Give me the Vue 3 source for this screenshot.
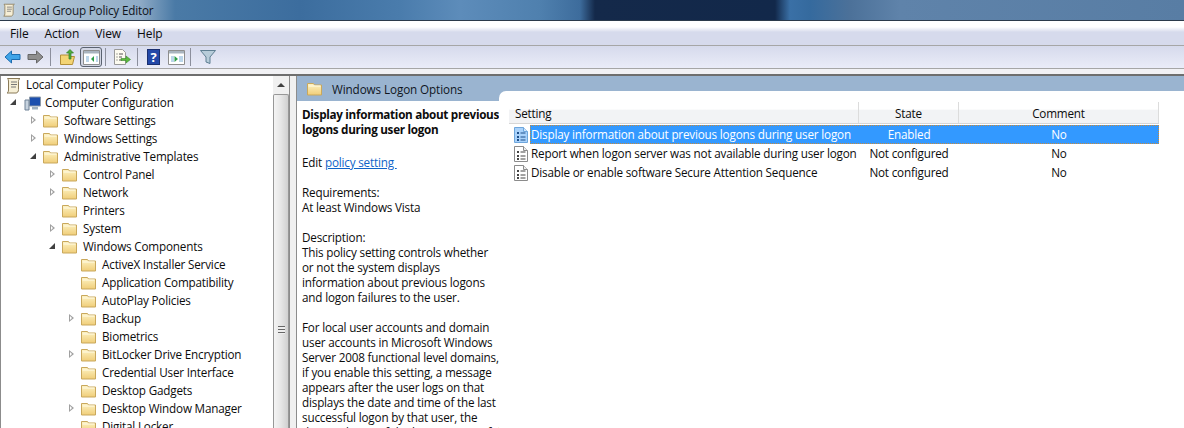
<script setup>
const menus = ["File", "Action", "View", "Help"];

const tree = [
  { label: "Software Settings", depth: 2, exp: "closed" },
  { label: "Windows Settings", depth: 2, exp: "closed" },
  { label: "Administrative Templates", depth: 2, exp: "open" },
  { label: "Control Panel", depth: 3, exp: "closed" },
  { label: "Network", depth: 3, exp: "closed" },
  { label: "Printers", depth: 3 },
  { label: "System", depth: 3, exp: "closed" },
  { label: "Windows Components", depth: 3, exp: "open" },
  { label: "ActiveX Installer Service", depth: 4 },
  { label: "Application Compatibility", depth: 4 },
  { label: "AutoPlay Policies", depth: 4 },
  { label: "Backup", depth: 4, exp: "closed" },
  { label: "Biometrics", depth: 4 },
  { label: "BitLocker Drive Encryption", depth: 4, exp: "closed" },
  { label: "Credential User Interface", depth: 4 },
  { label: "Desktop Gadgets", depth: 4 },
  { label: "Desktop Window Manager", depth: 4, exp: "closed" },
  { label: "Digital Locker", depth: 4 },
];

const settings = [
  { name: "Display information about previous logons during user logon", state: "Enabled", comment: "No", selected: true },
  { name: "Report when logon server was not available during user logon", state: "Not configured", comment: "No" },
  { name: "Disable or enable software Secure Attention Sequence", state: "Not configured", comment: "No" },
];

function indent(depth) {
  return { paddingLeft: (depth - 1) * 19 + 8 + "px" };
}
</script>

<template>
  <div class="win">
    <svg width="0" height="0" class="defs">
      <defs>
        <linearGradient id="fold" x1="0" y1="0" x2="0" y2="1">
          <stop offset="0" stop-color="#fdf3c4" />
          <stop offset="1" stop-color="#f0cd78" />
        </linearGradient>
        <symbol id="folder" viewBox="0 0 15 14">
          <path d="M.5 3V1.500h6l1 1.500h7v10H.5z" fill="url(#fold)" stroke="#c9a85c" />
          <path d="M1.500 4h12" stroke="#fffbe6" />
        </symbol>
        <symbol id="scroll" viewBox="0 0 17 17">
          <path d="M4 1.500h11c-1.500 1-1.500 2-1.500 3v8c0 2-1 3.500-2.500 3.500H2c1-.5 1.500-1.500 1.500-3V4C3.500 3 3 2 2.500 1.500z" fill="#f6efd6" stroke="#8a7a58" />
          <path d="M6 5h6M6 7.500h6M6 10h5" stroke="#777" />
        </symbol>
        <symbol id="page" viewBox="0 0 14 16">
          <path d="M.5.500h9l4 4v11H.5z" fill="#fff" stroke="#8b8b8b" />
          <path d="M9.500.5v4h4" fill="#eee" stroke="#8b8b8b" />
          <path d="M3 5h2v2H3zM3 9h2v2H3zM3 12h2v2H3z" fill="#444" />
          <path d="M6.500 6h5M6.500 10h5M6.500 13h5" stroke="#444" />
        </symbol>
        <symbol id="page-sel" viewBox="0 0 14 16">
          <path d="M.5.500h9l4 4v11H.5z" fill="#a9d2fb" stroke="#6ea6dc" />
          <path d="M9.500.5v4h4" fill="#cfe5fc" stroke="#6ea6dc" />
          <path d="M3 5h2v2H3zM3 9h2v2H3zM3 12h2v2H3z" fill="#1d4f8a" />
          <path d="M6.500 6h5M6.500 10h5M6.500 13h5" stroke="#1d4f8a" />
        </symbol>
      </defs>
    </svg>

    <!-- title bar -->
    <div class="title">
      <svg class="ico-title" width="14" height="16"><use href="#scroll" /></svg>
      <span>Local Group Policy Editor</span>
    </div>

    <!-- menu -->
    <div class="menu">
      <span v-for="m in menus" :key="m">{{ m }}</span>
    </div>

    <!-- toolbar -->
    <div class="tools">
      <svg width="17" height="14" viewBox="0 0 17 14">
        <path d="M1 7l6.500-6v3.500H16v5H7.500V13z" fill="#3fa4e8" stroke="#1c6cb0" />
      </svg>
      <svg class="t-fwd" width="17" height="14" viewBox="0 0 17 14">
        <path d="M16 7L9.500 1v3.500H1v5h8.500V13z" fill="#8f8f8f" stroke="#666" />
      </svg>
      <i class="sep s1"></i>
      <svg class="t-up" width="15" height="16" viewBox="0 0 15 16">
        <path d="M.5 6h9l1 1.500h4L12.500 15.500H.5z" fill="#f3d474" stroke="#b28f38" />
        <path d="M9 10V4H6.500l3.500-3.500L13.500 4H11v6z" fill="#4fae3c" stroke="#2f7d25" stroke-width=".7" />
      </svg>
      <span class="t-active">
        <svg width="17" height="15" viewBox="0 0 17 15">
          <path d="M.5.500h16v14H.5z" fill="#fff" stroke="#8e8e8e" />
          <path d="M1 1h15v2.500H1z" fill="#a9b4bf" />
          <path d="M3 6h3v6H3zM13 6h2v6h-2z" fill="#bcd6ea" />
          <path d="M11 6v6L8 9z" fill="#2e9e49" />
        </svg>
      </span>
      <i class="sep s2"></i>
      <svg class="t-export" width="17" height="16" viewBox="0 0 17 16">
        <path d="M.5.500h8l3 3v12H.5z" fill="#fdfbf0" stroke="#999" />
        <path d="M2.500 5h1M5 5h4M2.500 8h1M5 8h3M2.500 11h1M5 11h3" stroke="#555" />
        <path d="M7 9.500h5V7l4.500 3.500L12 14v-2.500H7z" fill="#5dbb3f" stroke="#3a8a28" stroke-width=".6" />
      </svg>
      <i class="sep s3"></i>
      <span class="t-help">?</span>
      <svg class="t-panel" width="17" height="15" viewBox="0 0 17 15">
        <path d="M.5.500h16v14H.5z" fill="#fff" stroke="#8e8e8e" />
        <path d="M1 1h15v2.500H1z" fill="#a9b4bf" />
        <path d="M3 6h3v6H3zM11 6h4v6h-4z" fill="#bcd6ea" />
        <path d="M6.500 6v6L10 9z" fill="#2e9e49" />
      </svg>
      <i class="sep s4"></i>
      <svg class="t-filter" width="16" height="15" viewBox="0 0 16 15">
        <path d="M.5.500h15L10 7v6.500L6 12V7z" fill="#b7ccd9" stroke="#5f7f92" />
      </svg>
    </div>

    <div class="gap"></div>

    <div class="main">
      <!-- tree -->
      <div class="tree">
        <div class="tree-rows">
          <div class="row root">
            <svg width="17" height="17"><use href="#scroll" /></svg>
            <span class="lbl">Local Computer Policy</span>
          </div>
          <div class="row comp">
            <i class="arrow open"></i>
            <svg class="pc" width="17" height="15" viewBox="0 0 17 15">
              <path d="M5.500 1h11v9h-11z" fill="#1c4fae" stroke="#8a98a8" />
              <path d="M1 4h4v10H1z" fill="#c6d2de" stroke="#6f8196" />
              <path d="M8 11h6v2.500H8z" fill="#9fb0c0" />
            </svg>
            <span class="lbl">Computer Configuration</span>
          </div>
          <div v-for="n in tree" :key="n.label" class="row" :style="indent(n.depth)">
            <i class="arrow" :class="n.exp || 'none'"></i>
            <svg class="fold" width="15" height="14"><use href="#folder" /></svg>
            <span class="lbl">{{ n.label }}</span>
          </div>
        </div>
        <div class="sbar">
          <div class="sbtn"><i></i></div>
          <div class="thumb">
            <div class="grip"></div>
          </div>
        </div>
      </div>

      <div class="split"></div>

      <!-- right side -->
      <div class="pane">
        <div class="pane-head">
          <svg width="15" height="14"><use href="#folder" /></svg>
          <span>Windows Logon Options</span>
        </div>
        <div class="pane-body">
          <div class="desc">
            <p class="desc-title">Display information about previous<br />logons during user logon</p>
            <p class="edit">Edit <a href="#">policy setting&nbsp;</a></p>
            <p>Requirements:<br />At least Windows Vista</p>
            <p>Description:<br />This policy setting controls whether<br />or not the system displays<br />information about previous logons<br />and logon failures to the user.</p>
            <p>For local user accounts and domain<br />user accounts in Microsoft Windows<br />Server 2008 functional level domains,<br />if you enable this setting, a message<br />appears after the user logs on that<br />displays the date and time of the last<br />successful logon by that user, the<br />date and time of the last unsuccessful</p>
          </div>
          <div class="list">
            <div class="thead">
              <div class="c-name th-first">Setting</div>
              <div class="c-state">State</div>
              <div class="c-comment">Comment</div>
            </div>
            <div v-for="s in settings" :key="s.name" class="trow" :class="{ sel: s.selected }">
              <svg class="doc" width="14" height="16"><use :href="s.selected ? '#page-sel' : '#page'" /></svg>
              <div class="cells">
                <div class="c-name">{{ s.name }}</div>
                <div class="c-state">{{ s.state }}</div>
                <div class="c-comment">{{ s.comment }}</div>
              </div>
            </div>
          </div>
        </div>
      </div>
    </div>
  </div>
</template>

<style scoped>
.win {
  width: 1184px;
  height: 428px;
  overflow: hidden;
  background: #fff;
  font-family: "Open Sans", "Noto Sans", sans-serif;
  font-size: 11.7px;
  letter-spacing: -0.18px;
  color: #0c0c0c;
  display: flex;
  flex-direction: column;
}
.defs {
  position: absolute;
}

.title {
  height: 20px;
  display: flex;
  align-items: center;
  flex-shrink: 0;
  border-bottom: 1px solid #2c3a4a;
  background: linear-gradient(90deg, #c4d2de 0, #a8bfd2 60px, #8fabc6 140px, #4a7aa6 175px, #3c6d9e 300px, #4a7cac 400px, #5d8cba 460px, #4f80ae 540px, #3d6c9c 580px, #14294a 595px, #12284a 775px, #3a70a6 790px, #356a9e 810px, #4c7199 850px, #5f83aa 900px, #587da4 1184px);
}
.title span {
  margin-left: 6px;
  color: #10141c;
}
.ico-title {
  margin-left: 2px;
}

.menu {
  height: 24px;
  display: flex;
  align-items: center;
  flex-shrink: 0;
  gap: 16px;
  padding-left: 10px;
  font-size: 12px;
  letter-spacing: -0.1px;
  background: linear-gradient(#fff 0, #fff 6px, #d6daec 11px, #d6daec 100%);
  border-bottom: 1px solid #a6a6a6;
}

.tools {
  height: 22px;
  flex-shrink: 0;
  display: flex;
  align-items: center;
  padding-left: 4px;
  background: linear-gradient(#d6daec, #eaecf8);
  border-bottom: 1px solid #a6a6a6;
}
.tools svg,
.tools span,
.tools i {
  flex-shrink: 0;
}
.t-fwd { margin-left: 6px; }
.sep {
  width: 1px;
  height: 18px;
  background: #8c8f9c;
}
.s1 { margin-left: 6px; }
.t-up { margin-left: 9px; }
.t-active {
  margin-left: 5px;
  width: 22px;
  height: 20px;
  box-sizing: border-box;
  display: flex;
  align-items: center;
  justify-content: center;
  border: 1px solid #5a6270;
  border-radius: 3px;
  background: #d2d6e4;
}
.s2 { margin-left: 3px; }
.t-export { margin-left: 8px; }
.s3 { margin-left: 6px; }
.t-help {
  margin-left: 9px;
  width: 13px;
  height: 16px;
  display: flex;
  align-items: center;
  justify-content: center;
  background: #2348a8;
  color: #fff;
  font-size: 13px;
  font-weight: 700;
  border: 1px solid #1a2f70;
  box-sizing: border-box;
}
.t-panel { margin-left: 8px; }
.s4 { margin-left: 5px; }
.t-filter { margin-left: 9px; }

.gap {
  height: 5px;
  flex-shrink: 0;
  background: #f1f1f4;
  border-bottom: 2px solid #6e6e6e;
}

.main {
  flex: 1;
  min-height: 0;
  display: flex;
}

.tree {
  width: 290px;
  flex-shrink: 0;
  display: flex;
  box-sizing: border-box;
  border-left: 1px solid #8c8c8c;
  border-right: 1px solid #8c8c8c;
  overflow: hidden;
}
.tree-rows {
  flex: 1;
  min-width: 0;
}
.row {
  height: 18px;
  display: flex;
  align-items: center;
  white-space: nowrap;
}
.row .lbl {
  margin-left: 6px;
  padding-bottom: 2px;
}
.root {
  padding-left: 4px;
}
.root .lbl {
  margin-left: 4px;
}
.comp {
  padding-left: 7px;
}
.comp .pc {
  margin-left: 6px;
}
.comp .lbl {
  margin-left: 4px;
}
.arrow {
  width: 10px;
  height: 10px;
  flex-shrink: 0;
  position: relative;
  margin-right: 5px;
}
.fold { flex-shrink: 0; }
.comp .arrow { margin-right: 0; }
.arrow.closed::before {
  content: "";
  position: absolute;
  left: 3px;
  top: 0;
  border-style: solid;
  border-width: 4px 0 4px 5px;
  border-color: transparent transparent transparent #a0a0a0;
}
.arrow.closed::after {
  content: "";
  position: absolute;
  left: 4px;
  top: 2px;
  border-style: solid;
  border-width: 2px 0 2px 2.500px;
  border-color: transparent transparent transparent #fff;
}
.arrow.open::before {
  content: "";
  position: absolute;
  left: 2px;
  top: 1px;
  border-style: solid;
  border-width: 0 0 6px 6px;
  border-color: transparent transparent #404040 transparent;
}

.sbar {
  width: 16px;
  flex-shrink: 0;
  background: #f0f0f0;
  display: flex;
  flex-direction: column;
}
.sbtn {
  height: 18px;
  flex-shrink: 0;
  display: flex;
  align-items: center;
  justify-content: center;
}
.sbtn i {
  border-style: solid;
  border-width: 0 4px 4px 4px;
  border-color: transparent transparent #404040 transparent;
}
.thumb {
  flex: 1;
  box-sizing: border-box;
  border: 1px solid #979797;
  border-bottom: 0;
  border-radius: 2px 2px 0 0;
  background: linear-gradient(90deg, #f4f4f4, #e6e6e6 50%, #d0d0d0);
  display: flex;
  justify-content: center;
  padding-top: 231px;
}
.grip {
  width: 7px;
  height: 8px;
  background: repeating-linear-gradient(#666 0 1px, #eee 1px 3px);
}

.split {
  width: 6px;
  flex-shrink: 0;
  background: #f0f0f0;
}

.pane {
  flex: 1;
  min-width: 0;
  display: flex;
  flex-direction: column;
  border-left: 1px solid #8c8c8c;
}
.pane-head {
  height: 25px;
  flex-shrink: 0;
  background: #9ab4d0;
  display: flex;
  align-items: center;
  padding-left: 10px;
  letter-spacing: -0.1px;
  color: #10161e;
}
.pane-head span {
  margin-left: 10px;
}
.pane-body {
  flex: 1;
  min-height: 0;
  display: flex;
}
.desc {
  width: 197px;
  flex-shrink: 0;
  padding: 6px 0 0 5px;
  line-height: 15px;
  white-space: nowrap;
}
.desc p {
  margin: 0 0 15px;
}
.desc-title {
  font-weight: 700;
  padding-bottom: 3px;
  letter-spacing: -0.3px;
}
.edit a {
  color: #0f63c8;
}

.list {
  flex: 1;
  min-width: 0;
  margin-top: -10px;
  background: #fff;
  border-top-left-radius: 7px;
  padding-left: 10px;
}
.thead {
  width: 650px;
  height: 21px;
  margin-top: 11px;
  display: flex;
  align-items: center;
  background: linear-gradient(#fff 0, #fff 35%, #f2f3f5 37%, #f2f3f5);
  border-bottom: 1px solid #d6d6d6;
}
.thead > div {
  height: 100%;
  display: flex;
  align-items: center;
  justify-content: center;
  box-sizing: border-box;
  border-right: 1px solid #dcdcdc;
}
.thead > .th-first {
  justify-content: flex-start;
  padding-left: 6px;
}
.c-name {
  width: 350px;
  flex-shrink: 0;
  white-space: nowrap;
}
.c-state {
  width: 100px;
  flex-shrink: 0;
  text-align: center;
  white-space: nowrap;
}
.c-comment {
  width: 200px;
  flex-shrink: 0;
  text-align: center;
}
.trow {
  width: 650px;
  height: 19px;
  display: flex;
  align-items: center;
}
.thead + .trow {
  margin-top: 1px;
}
.doc {
  margin-left: 5px;
  flex-shrink: 0;
}
.cells {
  flex: 1;
  height: 100%;
  display: flex;
  align-items: center;
  margin-left: 2px;
}
.cells > div {
  padding-bottom: 2px;
}
.cells .c-name {
  width: 329px;
  padding-left: 1px;
  box-sizing: border-box;
}
.trow.sel .cells {
  background: #3399ff;
  color: #fff;
  outline: 1px dotted #c98a3a;
  outline-offset: -1px;
}
</style>

<style>
html, body {
  margin: 0;
  background: #fff;
}
</style>
